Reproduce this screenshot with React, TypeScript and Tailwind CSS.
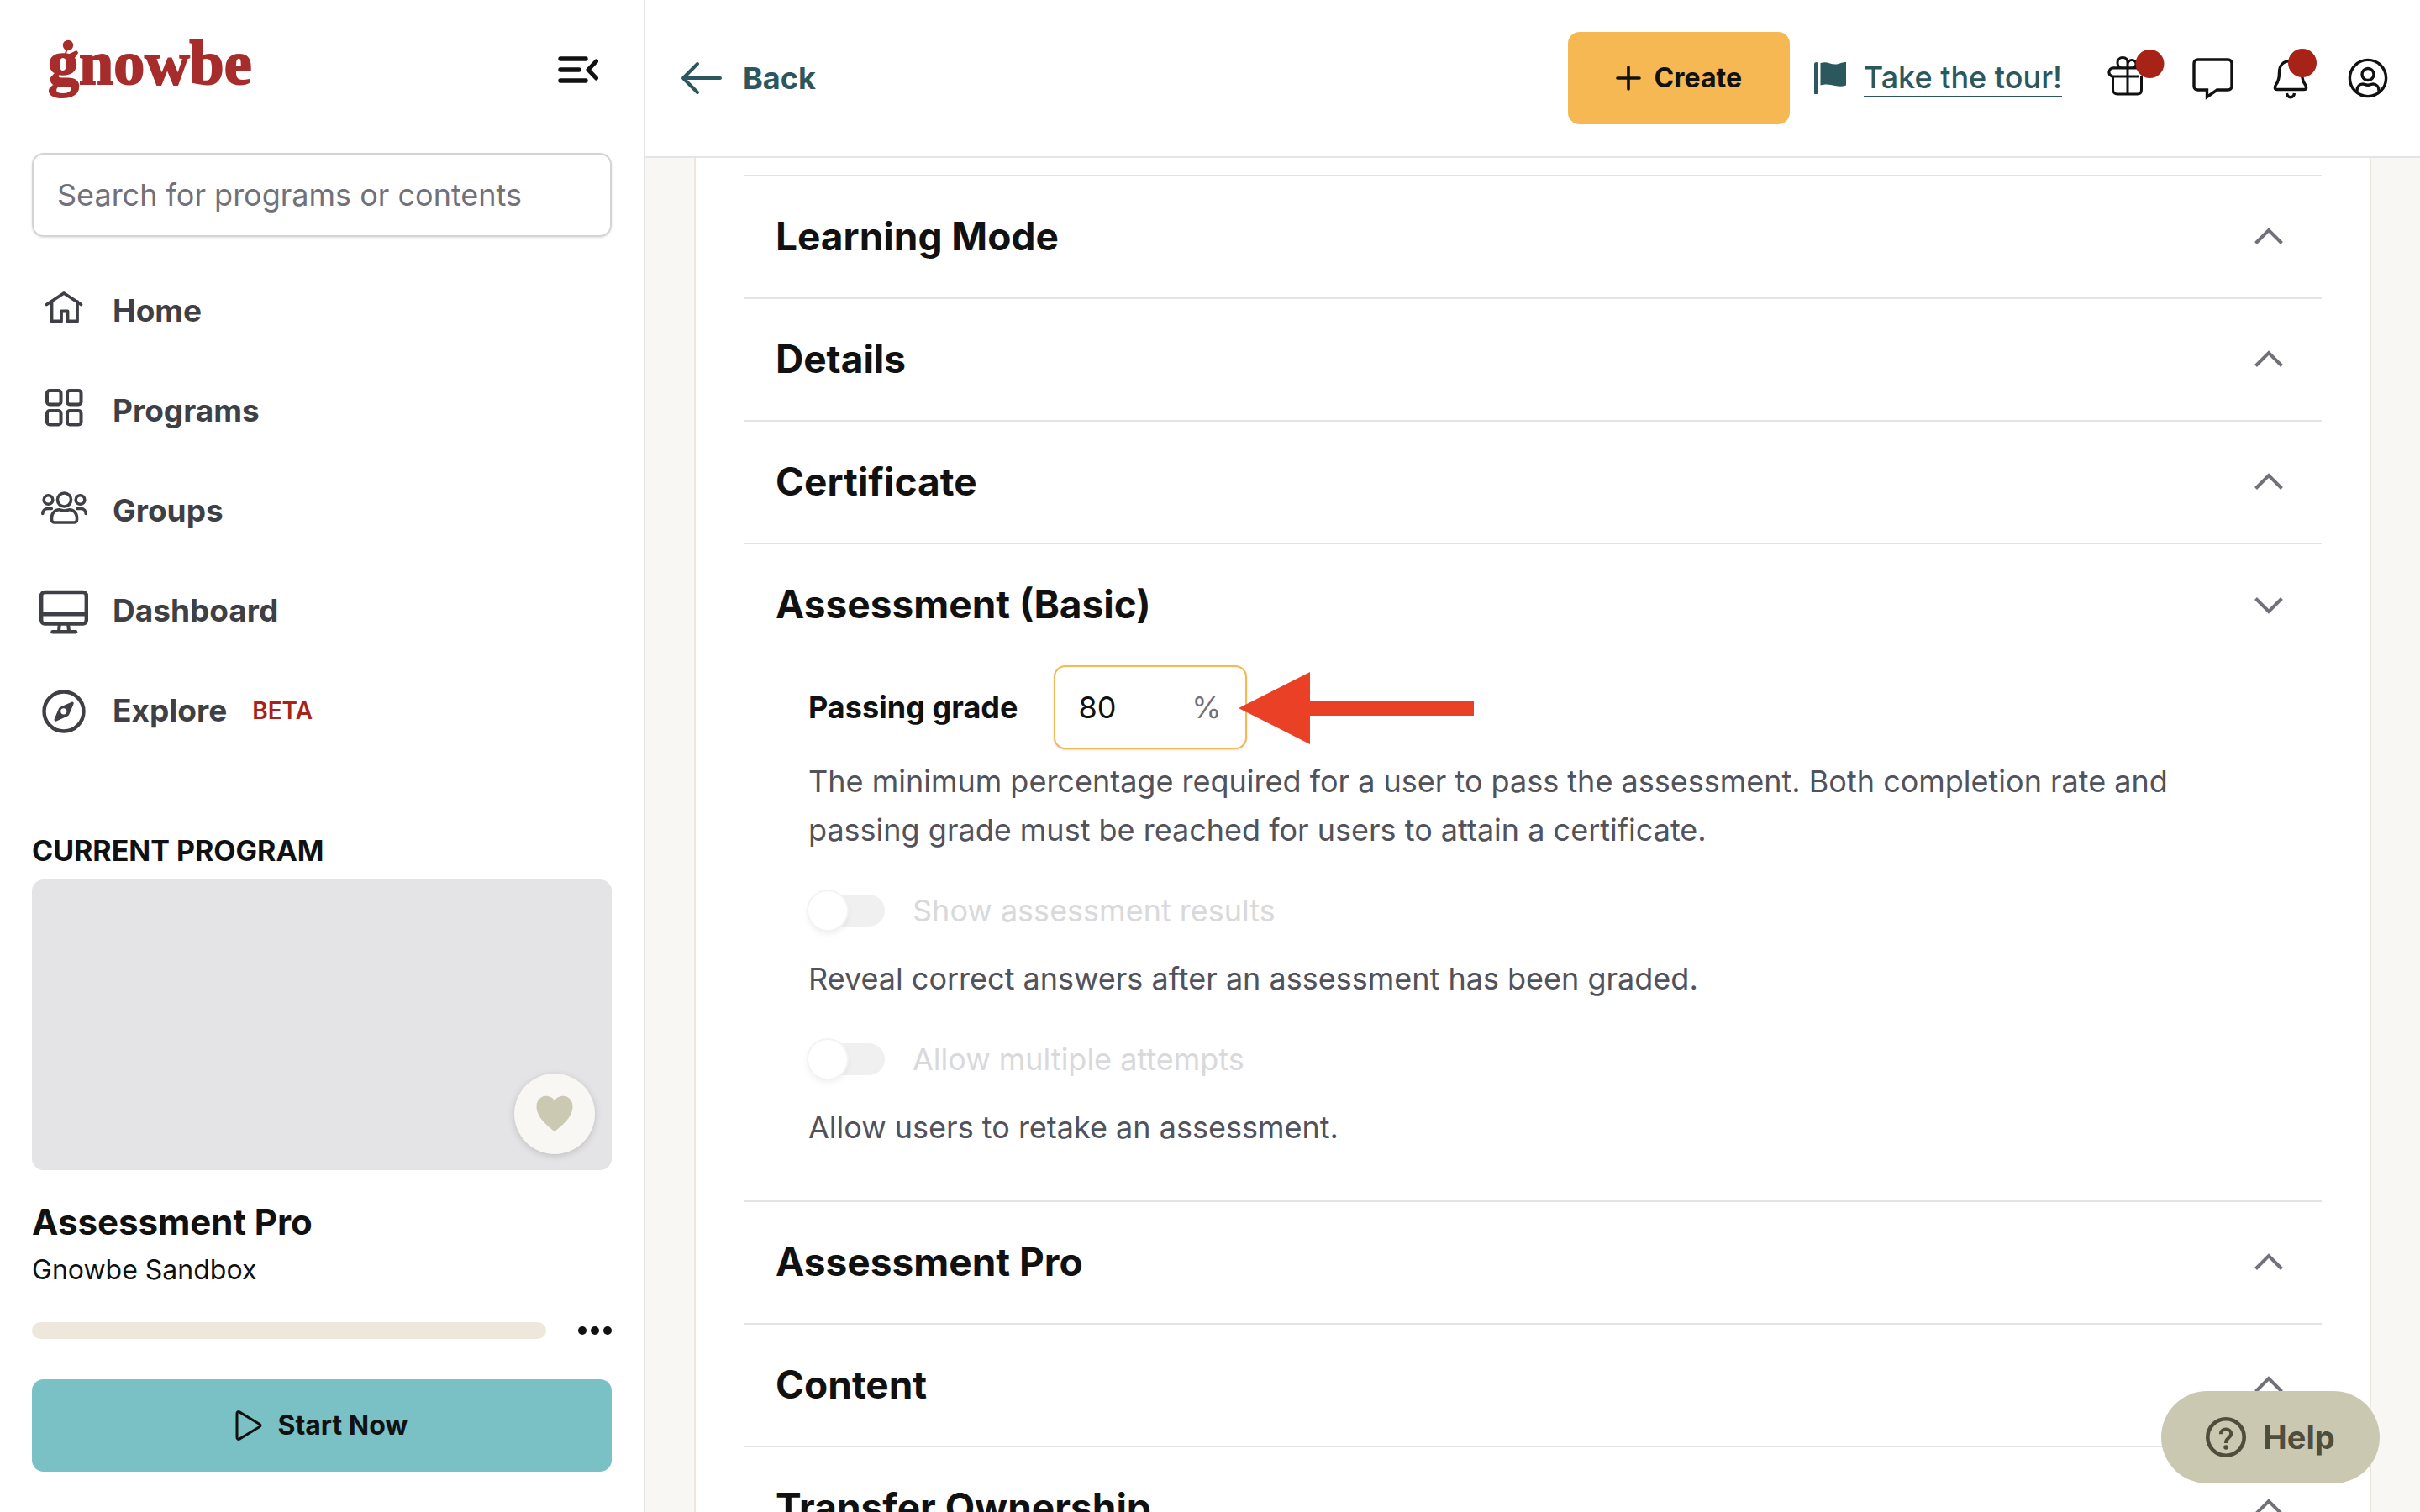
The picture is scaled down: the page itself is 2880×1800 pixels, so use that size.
import { useState, type ReactNode } from "react";

function NavIcon({ children }: { children: ReactNode }) {
  return (
    <svg
      viewBox="0 0 60 60"
      className="size-15 shrink-0"
      fill="none"
      stroke="currentColor"
      strokeWidth={4}
      strokeLinecap="round"
      strokeLinejoin="round"
      aria-hidden="true"
    >
      {children}
    </svg>
  );
}

const navItems: { label: string; badge?: string; icon: ReactNode }[] = [
  {
    label: "Home",
    icon: (
      <g strokeWidth={3.8}>
        <path d="M9.5 22.5 30 9l20.500 13.500" />
        <path d="M15.500 19v23.500h11.500V30.500h7.500v12H46V19" />
      </g>
    ),
  },
  {
    label: "Programs",
    icon: (
      <g strokeWidth={4}>
        <rect x="10" y="6" width="16.500" height="16.500" rx="3" />
        <rect x="34" y="6" width="16.500" height="16.500" rx="3" />
        <rect x="10" y="30" width="16.500" height="16.500" rx="3" />
        <rect x="34" y="30" width="16.500" height="16.500" rx="3" />
      </g>
    ),
  },
  {
    label: "Groups",
    icon: (
      <g strokeWidth={3.6}>
        <circle cx="30.500" cy="17" r="8" />
        <circle cx="11.500" cy="17" r="5.300" />
        <circle cx="49.500" cy="17" r="5.300" />
        <path d="M19 44c-2 0-3.500-1.300-3.500-3.300v-2.500c0-5.500 4-9.500 9-9.500 1.500 0 3 1.300 6 1.300s4.500-1.300 6-1.300c5 0 9 4 9 9.500v2.500c0 2-1.500 3.300-3.500 3.300z" />
        <path d="M4.800 33.500c0-3.500 2.500-6 6-6h4.500" />
        <path d="M56.200 33.500c0-3.500-2.500-6-6-6h-4.500" />
      </g>
    ),
  },
  {
    label: "Dashboard",
    icon: (
      <g strokeWidth={4.4}>
        <rect x="3.200" y="8" width="53.600" height="37.500" rx="4" />
        <path d="M3.500 34.200h53" />
        <path d="M24.800 46.500l-.8 8M35.200 46.500l.8 8" strokeWidth={4} />
        <path d="M16.500 55.200h27.500" />
      </g>
    ),
  },
  {
    label: "Explore",
    badge: "BETA",
    icon: (
      <>
        <circle cx="30" cy="31" r="23.500" strokeWidth={4.4} />
        <path
          fill="currentColor"
          stroke="none"
          fillRule="evenodd"
          d="M39.200 19.800c1.900-.7 3 .6 2.300 2.400l-5.200 12.300c-.4 1-1 1.600-1.900 2L21.200 42.400c-1.900.8-3.200-.6-2.500-2.400l5.100-12.300c.4-1 1-1.600 1.900-2zM29.800 27.200a3.600 3.600 0 1 0 0 7.200 3.600 3.600 0 0 0 0-7.200z"
        />
      </>
    ),
  },
];

function Chevron({ open }: { open: boolean }) {
  return (
    <svg viewBox="0 0 40 40" className="size-10 shrink-0" fill="none" stroke="#71717a" strokeWidth={4} aria-hidden="true">
      <path d={open ? "M4.500 12.500 20 28l15.500-15.500" : "M4.500 27.500 20 12l15.500 15.500"} />
    </svg>
  );
}

function Section({ title, children }: { title: string; children?: ReactNode }) {
  const [open, setOpen] = useState(Boolean(children));
  return (
    <section className="border-t-2 border-[#e3e3e5]">
      <h2>
        <button
          type="button"
          aria-expanded={open}
          onClick={() => setOpen(!open)}
          className="flex h-36 w-full items-center justify-between pr-[43px] pl-[38px] text-left text-[46px] font-bold text-[#111111]"
        >
          <span className="pb-0.5">{title}</span>
          <Chevron open={open} />
        </button>
      </h2>
      {open && children}
    </section>
  );
}

function DisabledSwitch({ label, hint }: { label: string; hint: string }) {
  return (
    <>
      <label className="mt-[38px] flex h-[58px] items-center text-[#d9d9db]">
        <span className="relative mr-[33px] flex h-[38px] w-[91px] items-center rounded-full bg-[#f0f0f0]">
          <input type="checkbox" role="switch" disabled className="absolute inset-0 appearance-none" />
          <span className="size-[46px] rounded-full bg-white shadow-[0_0_0_2px_#f3f3f3,0_4px_8px_rgba(0,0,0,0.08)]" />
        </span>
        {label}
      </label>
      <p className="mt-[23px]">{hint}</p>
    </>
  );
}

function Sidebar() {
  return (
    <aside className="flex w-[768px] shrink-0 flex-col border-r-2 border-[#e4e4e7] bg-white px-[38px]">
      <div className="flex h-[182px] shrink-0 items-start justify-between pr-4 pl-[19px]">
        <a
          href="#home"
          className="relative mt-[38px] font-['Liberation_Serif',serif] text-[74px] leading-none font-bold text-[#a62d2b] [-webkit-text-stroke:2px_#a62d2b]"
        >
          gnowbe
          <svg viewBox="0 0 24 24" className="absolute top-2 left-3.5 size-6" aria-hidden="true">
            <circle cx="10" cy="8" r="6.200" fill="currentColor" />
            <path d="M9 12 5 23" stroke="currentColor" strokeWidth="2" />
          </svg>
        </a>
        <button type="button" aria-label="Collapse menu" className="mt-[59px]">
          <svg viewBox="0 0 48 48" className="size-12" fill="none" stroke="#111111" strokeWidth={5} strokeLinecap="round" strokeLinejoin="round">
            <path d="M3 11h30M3 24h22M3 37h30" strokeWidth={5.4} />
            <path d="M45.500 14 36 24l9.500 10" />
          </svg>
        </button>
      </div>
      <input
        type="search"
        aria-label="Search for programs or contents"
        placeholder="Search for programs or contents"
        className="h-[100px] w-full shrink-0 rounded-[14px] border-2 border-[#d4d4d8] px-7 text-[36px] shadow-sm placeholder:text-[#71717a]"
      />
      <nav className="mt-[28px]">
        {navItems.map(({ label, badge, icon }) => (
          <a key={label} href={`#${label.toLowerCase()}`} className="flex h-[119px] items-center pl-2 text-[37px] font-bold text-[#3f3f46]">
            <NavIcon>{icon}</NavIcon>
            <span className="ml-7">{label}</span>
            {badge && <span className="ml-[30px] text-[28px] font-semibold text-[#a82317]">{badge}</span>}
          </a>
        ))}
      </nav>
      <h2 className="mt-[88px] text-[34px] leading-10 font-bold">CURRENT PROGRAM</h2>
      <div className="relative mt-3.5 aspect-[690/346] rounded-[14px] bg-[#e4e4e6]">
        <button
          type="button"
          aria-label="Favorite"
          className="absolute right-5 bottom-[19px] flex size-24 items-center justify-center rounded-full bg-[#f8f7f3] shadow-[0_2px_8px_rgba(0,0,0,0.16)]"
        >
          <svg viewBox="0 0 44 44" className="size-11" fill="#ccc9b3" aria-hidden="true">
            <path d="M22 43.500C14 36 .5 27 .5 13 .5 5.500 6 .8 12 .8c4.300 0 8 2.200 10 5.600C24 3 27.700.8 32 .8c6 0 11.500 4.700 11.500 12.200C43.500 27 30 36 22 43.500z" />
          </svg>
        </button>
      </div>
      <h3 className="mt-[37px] text-[42px] leading-[50px] font-bold">Assessment Pro</h3>
      <p className="mt-3 text-[32px] leading-10">Gnowbe Sandbox</p>
      <div className="mt-[42px] flex h-5 items-center gap-[38px]">
        <div role="progressbar" aria-valuenow={0} aria-label="Program progress" className="h-5 flex-1 rounded-full bg-[#eee7db]" />
        <button type="button" aria-label="More options">
          <svg viewBox="0 0 40 20" className="h-5 w-10" fill="#111111">
            <circle cx="5" cy="10" r="5" />
            <circle cx="20" cy="10" r="5" />
            <circle cx="35" cy="10" r="5" />
          </svg>
        </button>
      </div>
      <button
        type="button"
        className="mt-12 flex h-[110px] shrink-0 items-center justify-center gap-[18px] rounded-[14px] bg-[#79c1c5] text-[32px] font-bold"
      >
        <svg viewBox="0 0 32 36" className="h-9 w-8" fill="none" stroke="currentColor" strokeWidth={3} strokeLinejoin="round" aria-hidden="true">
          <path d="M2 4v28c0 2 1.500 3 3.300 1.900L29 19.500c1.300-.9 1.300-2.100 0-3L5.300 2.100C3.500 1 2 2 2 4z" />
        </svg>
        Start Now
      </button>
    </aside>
  );
}

function Header() {
  return (
    <header className="flex h-47 shrink-0 items-center border-b-2 border-[#e4e4e7] bg-white pr-[34px] pl-[42px]">
      <a href="#back" className="flex items-center gap-6 text-[36px] font-bold text-[#2c575c]">
        <svg viewBox="0 0 50 40" className="h-10 w-[50px]" fill="none" stroke="currentColor" strokeWidth={4} strokeLinecap="round" strokeLinejoin="round" aria-hidden="true">
          <path d="M47 20H3M20 3 3 20l17 17" />
        </svg>
        Back
      </a>
      <button
        type="button"
        className="ml-auto flex h-[110px] w-66 items-center justify-center gap-4 rounded-[14px] bg-[#f5b853] text-[32px] font-bold text-[#111111]"
      >
        <svg viewBox="0 0 30 30" className="size-[30px]" fill="none" stroke="currentColor" strokeWidth={3.600} strokeLinecap="round" aria-hidden="true">
          <path d="M15 2v26M2 15h26" />
        </svg>
        Create
      </button>
      <a href="#tour" className="ml-7 flex items-center gap-5 text-[36px] leading-11 font-medium text-[#2c575c]">
        <svg viewBox="0 0 40 40" className="size-10" fill="currentColor" aria-hidden="true">
          <path d="M1 3.500Q1 1 3.500 1T6 3.500V39H1zM8.500 2c8-2.500 11 1.500 18 1.500C31 3.500 33 1 39 1v27.500c-4 1.500-8 1.500-13 .5-6-1.500-11-2.500-17.500-.5z" />
        </svg>
        <span className="border-b-2 border-current">Take the tour!</span>
      </a>
      <div className="ml-12 flex items-center gap-9 text-[#111111]">
        <button type="button" aria-label="Rewards">
          <svg viewBox="0 3 68 60" className="h-15 w-17 overflow-visible" fill="none" stroke="currentColor" strokeWidth={3} strokeLinejoin="round">
            <path d="M13 20.800h30M13 31h30M13 20.800a5.100 5.100 0 0 0 0 10.200" strokeWidth={3.200} />
            <path d="M12.500 31v15.500c0 3 2 5.500 5.500 5.500h23.500c3.200 0 5-2 5-5V31" />
            <path d="M30 20.500V52" />
            <path d="M30 20.500v-6c0-4-2.500-6-6-6s-6 2.500-6 6c0 3 1.500 5.300 4 6M30 17.500c0-3.500 2-6 5-6s5 2 5 5-1.500 3.500-3 4" />
            <circle cx="56.500" cy="16" r="17" fill="#a82317" stroke="none" />
          </svg>
        </button>
        <button type="button" aria-label="Messages">
          <svg viewBox="0 3 56 60" className="h-15 w-14" fill="none" stroke="currentColor" strokeWidth={3.400}>
            <path d="M9.500 11h36c2.700 0 4.500 1.800 4.500 4.500v27c0 2.700-1.800 4.500-4.500 4.500H32.500L20.500 55.500V47h-11C6.800 47 5 45.200 5 42.500v-27C5 12.800 6.800 11 9.500 11z" />
          </svg>
        </button>
        <button type="button" aria-label="Notifications">
          <svg viewBox="0 3 56 60" className="h-15 w-14 overflow-visible" fill="none" stroke="currentColor" strokeWidth={3.400}>
            <path d="M28 12.500c-9 0-13.500 6-13.500 14 0 6-.5 10-4 14.500-1.800 2.300-1.800 5.500 1.500 5.500h32c3.300 0 3.300-3.200 1.500-5.500-3.500-4.500-4-8.500-4-14.500 0-8-4.500-14-13.500-14z" />
            <path d="M23.500 51c.5 3.200 2 4.700 4.500 4.700s4-1.500 4.500-4.700" />
            <circle cx="42" cy="15" r="17" fill="#a82317" stroke="none" />
          </svg>
        </button>
        <button type="button" aria-label="Account">
          <svg viewBox="0 3 56 60" className="h-15 w-14" fill="none" stroke="currentColor" strokeWidth={3.400}>
            <circle cx="28" cy="33" r="21.600" />
            <circle cx="28" cy="28.500" r="7" />
            <path d="M15 50v-2.500c0-4.500 3-7.500 7-7.500 1.500 0 3 1.200 6 1.200s4.500-1.200 6-1.200c4 0 7 3 7 7.500V50" />
          </svg>
        </button>
      </div>
    </header>
  );
}

export default function App() {
  return (
    <div className="flex h-screen overflow-hidden bg-white font-['Inter',sans-serif] text-[#111111]">
      <Sidebar />
      <div className="flex min-w-0 flex-1 flex-col">
        <Header />
        <main className="min-h-0 flex-1 overflow-hidden bg-[#f8f7f3] px-[58px]">
          <div className="border-x-2 border-[#ede7db] bg-white px-[57px] pt-5">
            <Section title="Learning Mode" />
            <Section title="Details" />
            <Section title="Certificate" />
            <Section title="Assessment (Basic)">
              <div className="px-[77px] pb-[58px] text-[36px] leading-[58px] text-[#52525b]">
                <div className="flex items-center gap-[42px]">
                  <label htmlFor="passing-grade" className="font-bold text-[#111111]">
                    Passing grade
                  </label>
                  <div className="relative flex h-[100px] w-[230px] items-center justify-between rounded-[14px] border-2 border-[#f5b853] bg-white px-7 shadow-sm">
                    <input id="passing-grade" type="text" inputMode="numeric" defaultValue="80" className="w-20 text-[#111111] outline-none" />
                    <span className="text-[#71717a]">%</span>
                    <svg viewBox="0 0 280 86" className="absolute top-1.5 left-[218px] h-[86px] w-[280px]" fill="#ea4025" aria-hidden="true">
                      <path d="M0 43 85 0v34h195v18H85v34z" />
                    </svg>
                  </div>
                </div>
                <p className="mt-[9px]">
                  The minimum percentage required for a user to pass the assessment. Both completion rate and passing grade must be reached for users to attain a
                  certificate.
                </p>
                <DisabledSwitch label="Show assessment results" hint="Reveal correct answers after an assessment has been graded." />
                <DisabledSwitch label="Allow multiple attempts" hint="Allow users to retake an assessment." />
              </div>
            </Section>
            <Section title="Assessment Pro" />
            <Section title="Content" />
            <Section title="Transfer Ownership" />
          </div>
        </main>
      </div>
      <button
        type="button"
        className="fixed right-12 bottom-[34px] flex h-[110px] w-65 items-center justify-center gap-5 rounded-full bg-[#cbc8b1] text-[38px] font-bold text-[#4f4d3b]"
      >
        <svg viewBox="0 0 48 48" className="size-12" fill="none" stroke="currentColor" strokeWidth={4.600} aria-hidden="true">
          <circle cx="24" cy="24" r="21.700" />
          <path d="M17.800 20.300c0-3.700 2.700-5.800 6.200-5.800s6.200 2.100 6.200 5.300c0 5-6.200 4.700-6.200 10.700v.5" strokeWidth={4} />
          <circle cx="24" cy="36" r="2.700" fill="currentColor" stroke="none" />
        </svg>
        Help
      </button>
    </div>
  );
}
